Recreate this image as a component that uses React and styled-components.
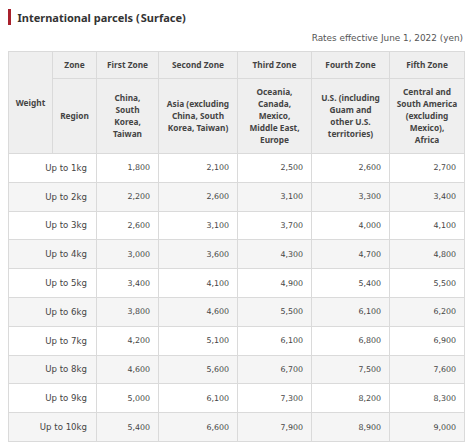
import React from "react";
import styled, { createGlobalStyle } from "styled-components";

const GlobalStyle = createGlobalStyle`
  html, body {
    margin: 0;
    padding: 0;
    background: #fff;
  }
  body {
    font-family: "DejaVu Sans", Verdana, sans-serif;
    color: #333;
  }
`;

const Page = styled.div`
  width: 474px;
  height: 444px;
  overflow: hidden;
  padding: 9px 10px 0 8px;
  box-sizing: border-box;
`;

const Title = styled.h2`
  margin: 0;
  display: flex;
  align-items: center;
  height: 16px;
  font-family: "Noto Sans", "Open Sans", sans-serif;
  font-size: 11px;
  font-weight: 700;
  color: #333;

  &::before {
    content: "";
    width: 2.5px;
    height: 16px;
    background: #a8202c;
    margin-right: 7px;
  }
`;

const Paren = styled.span`
  margin: 0 1px 0 3px;
`;

const Note = styled.p`
  margin: 0;
  padding-top: 7px;
  height: 19px;
  line-height: 12px;
  text-align: right;
  font-family: "DejaVu Sans", Verdana, sans-serif;
  font-size: 8.9px;
  color: #555;
  padding-right: 1px;
`;

const Table = styled.table`
  width: 456px;
  table-layout: fixed;
  border-collapse: collapse;
  font-size: 8.6px;
  color: #444;
`;

const Head = styled.th`
  background: #efefef;
  border: 1px solid #dadada;
  font-family: "Noto Sans", "Open Sans", sans-serif;
  font-size: 8.3px;
  font-weight: 700;
  color: #444;
  text-align: center;
  vertical-align: middle;
  line-height: 12px;
  white-space: nowrap;
  padding: 0 2px;
  height: ${({ $h }) => $h || "auto"};
`;

const Row = styled.tr`
  background: ${({ $alt }) => ($alt ? "#f5f5f5" : "#fff")};
`;

const Cell = styled.td`
  border: 1px solid #dadada;
  text-align: right;
  padding: 0 8px 0 4px;
  height: 27.8px;
  font-size: 7.9px;
  color: #444;
`;

const LabelCell = styled(Cell)`
  padding-right: 9px;
  font-size: 8.6px;
`;

const regions = [
  ["China,", "South", "Korea,", "Taiwan"],
  ["Asia (excluding", "China, South", "Korea, Taiwan)"],
  ["Oceania,", "Canada,", "Mexico,", "Middle East,", "Europe"],
  ["U.S. (including", "Guam and", "other U.S.", "territories)"],
  ["Central and", "South America", "(excluding", "Mexico),", "Africa"],
];

const zones = ["First Zone", "Second Zone", "Third Zone", "Fourth Zone", "Fifth Zone"];

const rates = [
  ["1,800", "2,100", "2,500", "2,600", "2,700"],
  ["2,200", "2,600", "3,100", "3,300", "3,400"],
  ["2,600", "3,100", "3,700", "4,000", "4,100"],
  ["3,000", "3,600", "4,300", "4,700", "4,800"],
  ["3,400", "4,100", "4,900", "5,400", "5,500"],
  ["3,800", "4,600", "5,500", "6,100", "6,200"],
  ["4,200", "5,100", "6,100", "6,800", "6,900"],
  ["4,600", "5,600", "6,700", "7,500", "7,600"],
  ["5,000", "6,100", "7,300", "8,200", "8,300"],
  ["5,400", "6,600", "7,900", "8,900", "9,000"],
];

const widths = [44, 44, 62, 79, 74, 78, 75];

export default function App() {
  return (
    <Page>
      <GlobalStyle />
      <Title>
        International parcels<Paren>(</Paren>Surface)
      </Title>
      <Note>Rates effective June 1, 2022 (yen)</Note>
      <Table>
        <colgroup>
          {widths.map((w, i) => (
            <col key={i} style={{ width: w }} />
          ))}
        </colgroup>
        <thead>
          <tr>
            <Head rowSpan={2}>Weight</Head>
            <Head $h="26px">Zone</Head>
            {zones.map((z) => (
              <Head key={z}>{z}</Head>
            ))}
          </tr>
          <tr>
            <Head $h="74px">Region</Head>
            {regions.map((lines, i) => (
              <Head key={i}>
                {lines.map((l, j) => (
                  <React.Fragment key={j}>
                    {j > 0 && <br />}
                    {l}
                  </React.Fragment>
                ))}
              </Head>
            ))}
          </tr>
        </thead>
        <tbody>
          {rates.map((row, i) => (
            <Row key={i} $alt={i % 2 === 1}>
              <LabelCell colSpan={2}>Up to {i + 1}kg</LabelCell>
              {row.map((v, j) => (
                <Cell key={j}>{v}</Cell>
              ))}
            </Row>
          ))}
        </tbody>
      </Table>
    </Page>
  );
}
